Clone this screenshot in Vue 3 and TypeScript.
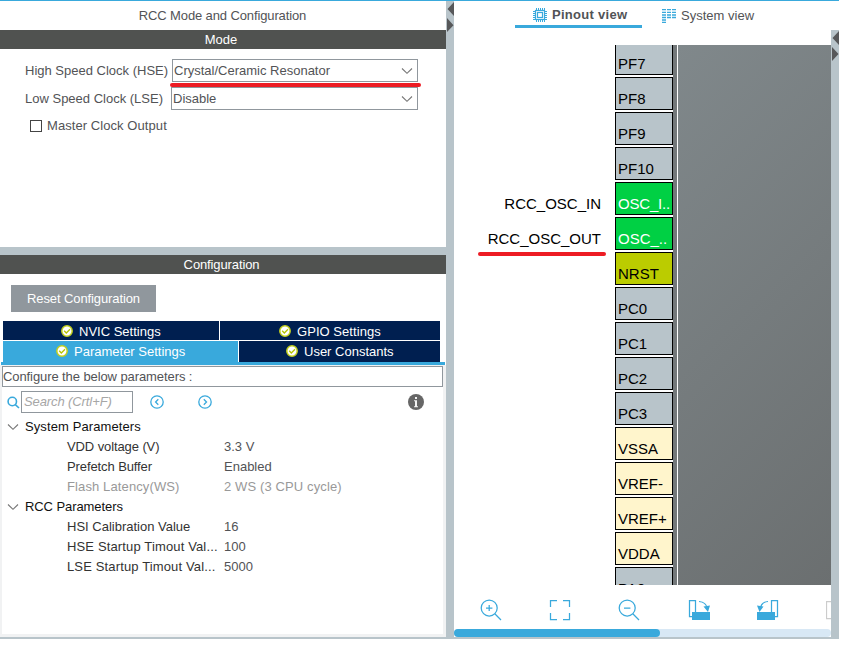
<script setup lang="ts">
interface Pin { name: string; kind: string; signal?: string; marked?: boolean }
interface Param { label: string; value: string; disabled?: boolean; cls?: string }
interface Group { title: string; params: Param[] }

const pins: Pin[] = [
  { name: 'PF7', kind: 'io' },
  { name: 'PF8', kind: 'io' },
  { name: 'PF9', kind: 'io' },
  { name: 'PF10', kind: 'io' },
  { name: 'OSC_I..', kind: 'used tight', signal: 'RCC_OSC_IN' },
  { name: 'OSC_..', kind: 'used', signal: 'RCC_OSC_OUT', marked: true },
  { name: 'NRST', kind: 'reset' },
  { name: 'PC0', kind: 'io' },
  { name: 'PC1', kind: 'io' },
  { name: 'PC2', kind: 'io' },
  { name: 'PC3', kind: 'io' },
  { name: 'VSSA', kind: 'power' },
  { name: 'VREF-', kind: 'power' },
  { name: 'VREF+', kind: 'power' },
  { name: 'VDDA', kind: 'power' },
  { name: 'PA0', kind: 'io' },
]

const groups: Group[] = [
  {
    title: 'System Parameters',
    params: [
      { label: 'VDD voltage (V)', value: '3.3 V', cls: 'narrow' },
      { label: 'Prefetch Buffer', value: 'Enabled', cls: 'narrow' },
      { label: 'Flash Latency(WS)', value: '2 WS (3 CPU cycle)', disabled: true },
    ],
  },
  {
    title: 'RCC Parameters',
    params: [
      { label: 'HSI Calibration Value', value: '16' },
      { label: 'HSE Startup Timout Val...', value: '100', cls: 'wide' },
      { label: 'LSE Startup Timout Val...', value: '5000', cls: 'wide' },
    ],
  },
]

const tabRows = [
  [
    { label: 'NVIC Settings', cls: 'nvic' },
    { label: 'GPIO Settings', cls: 'gpio' },
  ],
  [
    { label: 'Parameter Settings', cls: 'param active' },
    { label: 'User Constants', cls: 'user' },
  ],
]
</script>

<template>
  <div class="window">
    <section class="left">
      <div class="title">RCC Mode and Configuration</div>
      <div class="bar">Mode</div>
      <div class="mode">
        <div class="field first">
          <label>High Speed Clock (HSE)</label>
          <div class="combo">
            <span>Crystal/Ceramic Resonator</span>
            <svg width="12" height="8" viewBox="0 0 12 8"><path d="M1 1.5 L6 6.3 L11 1.5" /></svg>
            <i class="mark"></i>
          </div>
        </div>
        <div class="field second">
          <label>Low Speed Clock (LSE)</label>
          <div class="combo">
            <span>Disable</span>
            <svg width="12" height="8" viewBox="0 0 12 8"><path d="M1 1.5 L6 6.3 L11 1.5" /></svg>
          </div>
        </div>
        <div class="check"><i></i><span>Master Clock Output</span></div>
      </div>
      <div class="hsplit"></div>
      <div class="bar config">Configuration</div>
      <div class="actions"><button>Reset Configuration</button></div>
      <div class="tabs">
        <div v-for="(row, r) in tabRows" :key="r" class="tabrow" :class="'row' + r">
          <div v-for="t in row" :key="t.label" class="tab" :class="t.cls">
            <svg width="12" height="12" viewBox="0 0 12 12">
              <circle cx="6" cy="6" r="5.2" fill="#fff" stroke="#c2cf1c" stroke-width="1.5" />
              <path d="M3.2 5.8 L5.3 8 L9 4.2" fill="none" stroke="#b5c400" stroke-width="1.3" />
            </svg>
            <span>{{ t.label }}</span>
          </div>
        </div>
      </div>
      <div class="tabline"></div>
      <div class="params">
        <div class="hint">Configure the below parameters :</div>
        <div class="search">
          <svg class="glass" width="13" height="13" viewBox="0 0 13 13">
            <circle cx="5.3" cy="5.5" r="4.2" /><path d="M8.3 8.6 L12 12" />
          </svg>
          <div class="input">Search (Crtl+F)</div>
          <svg class="nav prev" width="14" height="14" viewBox="0 0 14 14">
            <circle cx="7" cy="7" r="6.2" /><path d="M8.3 4.3 L5.6 7 L8.3 9.7" />
          </svg>
          <svg class="nav next" width="14" height="14" viewBox="0 0 14 14">
            <circle cx="7" cy="7" r="6.2" /><path d="M5.8 4.3 L8.5 7 L5.8 9.7" />
          </svg>
          <svg class="info" width="16" height="16" viewBox="0 0 16 16">
            <circle cx="8" cy="8" r="8" fill="#666" />
            <path d="M7 3h2v2h-2z M6 6.3h3v6h1v1h-4v-1h1v-5h-1z" fill="#f4f4f4" />
          </svg>
        </div>
        <div v-for="g in groups" :key="g.title" class="group">
          <div class="ghead">
            <svg width="12" height="8" viewBox="0 0 12 8"><path d="M1 1.5 L6 6.3 L11 1.5" /></svg>
            <span>{{ g.title }}</span>
          </div>
          <div v-for="p in g.params" :key="p.label" class="prow" :class="{ disabled: p.disabled }">
            <span class="plabel" :class="p.cls">{{ p.label }}</span><span class="pval">{{ p.value }}</span>
          </div>
        </div>
      </div>
    </section>

    <div class="vsplit">
      <svg width="8" height="34" viewBox="0 0 8 34"><path d="M8 1 L1.5 8 L8 15z M1 17 L7.5 24.2 L1 31z" /></svg>
    </div>

    <section class="right">
      <div class="views">
        <div class="view on">
          <svg width="14" height="14" viewBox="0 0 14 14" fill="none" stroke="#39a9dc">
            <rect x="2.5" y="2.5" width="9" height="9" stroke-width="1.2" />
            <rect x="4.5" y="4.5" width="5" height="5" stroke-width="1.2" />
            <path d="M3.5 0V2 M5.5 0V2 M7.5 0V2 M9.5 0V2 M11.5 0V2 M3.5 12V14 M5.5 12V14 M7.5 12V14 M9.5 12V14 M11.5 12V14 M0 3.5H2 M0 5.5H2 M0 7.5H2 M0 9.5H2 M0 11.5H2 M12 3.5H14 M12 5.5H14 M12 7.5H14 M12 9.5H14 M12 11.5H14" />
          </svg>
          <span>Pinout view</span>
        </div>
        <div class="view sys">
          <svg width="14" height="14" viewBox="0 0 14 14" fill="none" stroke="#39a9dc" stroke-width="1.3">
            <path d="M0 .7H4 M5 .7H9 M10 .7H14 M0 3.400H4 M5 3.400H9 M10 3.400H14 M0 6H4 M5 6H9 M10 6H14 M0 8.500H4 M5 8.500H9 M10 8.500H14 M0 11H4 M0 13.300H4" />
          </svg>
          <span>System view</span>
        </div>
      </div>
      <div class="stage">
        <div class="canvas">
          <div class="pins">
            <div v-for="p in pins" :key="p.name" class="pinrow">
              <span class="signal" :class="{ marked: p.marked }">{{ p.signal }}</span>
              <div class="pin" :class="p.kind">{{ p.name }}</div>
            </div>
          </div>
          <div class="edge"></div>
          <div class="chip"></div>
        </div>
        <div class="tools">
          <svg width="22" height="22" viewBox="0 0 22 22"><circle cx="9.2" cy="9" r="8" /><path d="M14.8 14.7 L21 21 M6 9H12.4 M9.2 6V12" /></svg>
          <svg width="22" height="22" viewBox="0 0 22 22"><path d="M1.5 8V1.5H8 M14 1.5H20.5V8 M20.5 14V20.5H14 M8 20.5H1.5V14" /></svg>
          <svg width="22" height="22" viewBox="0 0 22 22"><circle cx="9.2" cy="9" r="8" /><path d="M14.8 14.7 L21 21 M6 9H12.4" /></svg>
          <svg width="22" height="22" viewBox="0 0 22 22">
            <path d="M4 17.5H1.5V1.5H7.5V13" /><path d="M11 2.5C16 3 18.5 5.500 19 9" />
            <path class="solid" d="M4 13H22V21H4z M15.500 7.500L22 6.500 L20 13z" />
          </svg>
          <svg width="22" height="22" viewBox="0 0 22 22">
            <path d="M18 17.500H20.500V1.500H14.500V13" /><path d="M11 2.500C6 3 4 5.500 3.500 9" />
            <path class="solid" d="M0 13H18V21H0z M0 6.500L6.500 7.500 L2.500 13z" />
          </svg>
          <svg width="22" height="22" viewBox="0 0 22 22"><path class="off" d="M.5 2.500H20V19.500H.5z" /></svg>
        </div>
        <div class="scroll"><div class="thumb"></div></div>
        <div class="vsplit side">
          <svg width="8" height="34" viewBox="0 0 8 34"><path d="M8 1 L1.500 8 L8 15z M1 17 L7.500 24 L1 31z" /></svg>
        </div>
      </div>
    </section>
  </div>
</template>

<style>
body { background: #fff; overflow: hidden; }
</style>

<style scoped>
* { box-sizing: border-box; }
.window {
  width: 839px; height: 639px; display: flex; background: #fff;
  border-top: 1px solid #39a9dc; border-bottom: 2px solid #b8c4ca;
  font: 13px/16px "Liberation Sans", Arial, sans-serif; color: #525356; white-space: nowrap;
}
svg { display: block; flex: none; }
.left { width: 446px; height: 636px; display: flex; flex-direction: column; flex: none; }
.title { height: 29px; text-align: center; line-height: 29px; padding-right: 1px; letter-spacing: -.12px; }
.bar { height: 19px; line-height: 19px; background: #505250; color: #fff; text-align: center; padding-right: 4px; flex: none; }
.config { padding-right: 3px; letter-spacing: -.12px; }
.mode { height: 198px; padding: 10px 0 0 25px; }
.field { display: flex; align-items: center; height: 23px; }
.field label { width: 147px; }
.first { margin-bottom: 5px; }
.second label { width: 146px; }
.combo { position: relative; width: 246px; height: 23px; border: 1px solid #90979d; display: flex; align-items: center; justify-content: space-between; padding: 0 4px 0 1px; }
.second .combo { width: 247px; }
.combo svg path, .ghead svg path { fill: none; stroke: #777; stroke-width: 1.1; }
.mark { position: absolute; left: -3px; top: 23px; width: 251px; height: 4px; border-radius: 2px; background: #ed1c24; z-index: 1; }
.check { display: flex; align-items: center; gap: 5px; margin: 8px 0 0 5px; height: 16px; }
.check i { width: 12px; height: 12px; border: 1px solid #444; }
.check span { letter-spacing: .07px; }
.hsplit { height: 8px; background: #b8c4ca; flex: none; }
.actions { height: 47px; padding: 11px 0 0 11px; flex: none; }
button { display: block; width: 145px; height: 27px; border: 0; padding: 0; background: #90979d; color: #fff; font: inherit; letter-spacing: -.1px; }
.tabs { padding: 0 6px 0 3px; display: flex; flex-direction: column; gap: 1px; flex: none; }
.tabrow { display: flex; gap: 1px; height: 19px; }
.row1 { height: 21px; }
.tab { display: flex; align-items: center; gap: 6px; background: #001f50; color: #fff; }
.tab span { padding-top: 2px; }
.row1 .tab { padding-bottom: 1px; }
.nvic { width: 216px; padding-left: 58px; }
.gpio { width: 220px; padding-left: 59px; letter-spacing: .05px; }
.param { width: 235px; padding-left: 53px; }
.user { width: 201px; padding-left: 47px; }
.active { background: #39a9dc; }
.tabline { height: 3px; margin: 0 1px; background: #39a9dc; flex: none; }
.params { flex: 1; border: solid #f1f2f3; border-width: 1px 3px 3px 2px; min-height: 0; }
.hint { height: 21px; line-height: 20px; border: 1px solid #90979d; letter-spacing: -.09px; }
.search { display: flex; align-items: center; height: 22px; margin-top: 4px; padding-left: 5px; }
.glass, .nav { fill: none; stroke: #39a9dc; stroke-width: 1.3; }
.glass { stroke-width: 1.6; }
.input { margin-left: 1px; width: 112px; height: 22px; border: 1px solid #90979d; line-height: 20px; padding-left: 2px; font-style: italic; color: #a6a6a6; letter-spacing: -.1px; }
.prev { margin-left: 17px; }
.next { margin-left: 34px; }
.info { margin-left: 196px; }
.search + .group { margin-top: 4px; }
.ghead { height: 20px; display: flex; align-items: center; gap: 6px; padding-left: 5px; color: #111; }
.group:nth-child(3) .ghead { letter-spacing: .1px; }
.group:nth-child(4) .ghead { letter-spacing: -.08px; }
.prow { height: 20px; line-height: 20px; display: flex; padding-left: 65px; }
.plabel { width: 157px; color: #333; }
.narrow { letter-spacing: -.1px; }
.wide { letter-spacing: .14px; }
.disabled, .disabled .plabel { color: #999; }
.disabled { letter-spacing: .12px; }
.vsplit { width: 8px; height: 636px; background: #b8c4ca; flex: none; }
.vsplit svg { fill: #57585a; }
.right { width: 385px; flex: none; }
.views { display: flex; height: 29px; padding-left: 61px; }
.view { display: flex; align-items: center; height: 27px; }
.on { width: 127px; gap: 5px; padding-left: 18px; font-weight: bold; border-bottom: 3px solid #39a9dc; padding-top: 4px; letter-spacing: .28px; }
.sys { gap: 5px; padding: 2px 0 0 20px; letter-spacing: .02px; }
.sys span { padding-top: 1px; }
.stage { position: relative; width: 377px; height: 607px; padding-top: 15px; }
.canvas { height: 540px; display: flex; overflow: hidden; color: #000; font-size: 15px; }
.pins { width: 219px; margin-top: -3px; display: flex; flex-direction: column; gap: 2px; }
.pinrow { height: 33px; display: flex; justify-content: flex-end; align-items: flex-start; flex: none; }
.signal { height: 40px; line-height: 43px; margin-right: 14px; position: relative; }
.marked::after { content: ""; position: absolute; left: -10px; right: -5px; top: 35px; height: 4px; border-radius: 2px; background: #ed1c24; }
.pin { width: 58px; height: 33px; border: 1px solid #000; padding-left: 2px; line-height: 41px; overflow: hidden; }
.io { background: #b8c4ca; }
.used { background: #00d044; color: #fff; }
.tight { letter-spacing: -.2px; }
.reset { background: #bbcc00; }
.power { background: #fff5cc; }
.edge { width: 5px; background: #73787a; border-right: 1px solid #fff; }
.chip { width: 153px; background: linear-gradient(135deg, #80888b, #6b6f70); }
.tools { height: 44px; display: flex; gap: 47.2px; padding: 14px 0 0 26px; overflow: hidden; }
.tools path, .tools circle { fill: none; stroke: #39a9dc; stroke-width: 1.25; }
.tools .solid { fill: #39a9dc; stroke: none; }
.tools .off { stroke: #ccc; }
.scroll { height: 8px; border-radius: 4px; background: #d8e8f5; }
.thumb { width: 206px; height: 8px; border-radius: 4px; background: #39a9dc; }
.side { position: absolute; left: 377px; top: 0; height: 607px; }
</style>
